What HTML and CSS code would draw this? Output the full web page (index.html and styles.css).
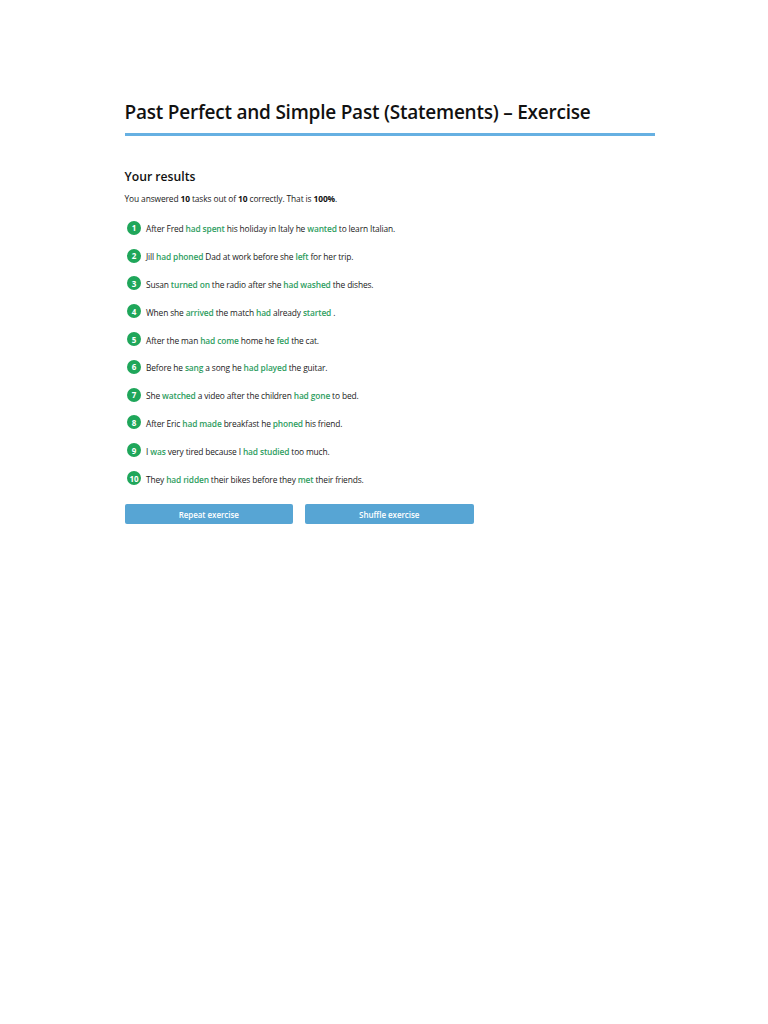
FILE: index.html
```html
<!DOCTYPE html>
<html lang="en">
<head>
<meta charset="utf-8">
<title>Past Perfect and Simple Past (Statements) – Exercise</title>
<link rel="stylesheet" href="styles.css">
</head>
<body>
<main class="page">
  <h1 class="title">Past Perfect and Simple Past (Statements) – Exercise</h1>
  <h2 class="subtitle">Your results</h2>
  <p class="summary">You answered <b>10</b> tasks out of <b>10</b> correctly. That is <b>100%</b>.</p>
  <ol class="tasks">
    <li class="task"><span class="num">1</span><span>After Fred <b>had spent</b> his holiday in Italy he <b>wanted</b> to learn Italian.</span></li>
    <li class="task"><span class="num">2</span><span>Jill <b>had phoned</b> Dad at work before she <b>left</b> for her trip.</span></li>
    <li class="task"><span class="num">3</span><span>Susan <b>turned on</b> the radio after she <b>had washed</b> the dishes.</span></li>
    <li class="task"><span class="num">4</span><span>When she <b>arrived</b> the match <b>had</b> already <b>started</b> .</span></li>
    <li class="task"><span class="num">5</span><span>After the man <b>had come</b> home he <b>fed</b> the cat.</span></li>
    <li class="task"><span class="num">6</span><span>Before he <b>sang</b> a song he <b>had played</b> the guitar.</span></li>
    <li class="task"><span class="num">7</span><span>She <b>watched</b> a video after the children <b>had gone</b> to bed.</span></li>
    <li class="task"><span class="num">8</span><span>After Eric <b>had made</b> breakfast he <b>phoned</b> his friend.</span></li>
    <li class="task"><span class="num">9</span><span>I <b>was</b> very tired because I <b>had studied</b> too much.</span></li>
    <li class="task"><span class="num">10</span><span>They <b>had ridden</b> their bikes before they <b>met</b> their friends.</span></li>
  </ol>
  <div class="actions">
    <a class="btn">Repeat exercise</a>
    <a class="btn">Shuffle exercise</a>
  </div>
</main>
</body>
</html>
```
FILE: styles.css
```css
* { box-sizing: border-box; }
html, body { margin: 0; background: #fff; }
body { font-family: "Open Sans", "Noto Sans", sans-serif; color: #222; }
.page { width: 530.5px; margin-left: 124.5px; padding-top: 98.5px; }
.title {
  margin: 0;
  font-size: 19px;
  letter-spacing: -0.23px;
  line-height: 27px;
  font-weight: 600;
  color: #111;
  padding-bottom: 7.5px;
  border-bottom: 3px solid #66b0e2;
  white-space: nowrap;
}
.subtitle { margin: 32px 0 0; font-size: 12.2px; line-height: 18px; font-weight: 600; color: #111; }
.summary { margin: 6px 0 0; font-size: 8.4px; letter-spacing: -0.11px; line-height: 14px; color: #222; }
.summary b { font-weight: 700; color: #111; }
.tasks { list-style: none; margin: 9px 0 0; padding: 0 0 0 2.5px; }
.task { display: flex; align-items: center; gap: 5px; height: 27.8px; font-size: 8.4px; letter-spacing: -0.14px; color: #222; }
.task b { font-weight: 600; color: #2f9e5f; }
.num {
  flex: none;
  width: 14px;
  height: 14px;
  margin-bottom: 2px;
  border-radius: 50%;
  background: #1fa65a;
  color: #fff;
  font-size: 8px;
  font-weight: 700;
  display: flex;
  align-items: center;
  justify-content: center;
}
.actions { display: flex; gap: 12px; margin-top: 11px; }
.btn {
  width: 168.5px;
  height: 20px;
  padding-top: 2px;
  background: #57a5d4;
  border-radius: 2px;
  color: #fff;
  font-size: 8px;
  letter-spacing: -0.05px;
  font-weight: 600;
  display: flex;
  align-items: center;
  justify-content: center;
}
```
